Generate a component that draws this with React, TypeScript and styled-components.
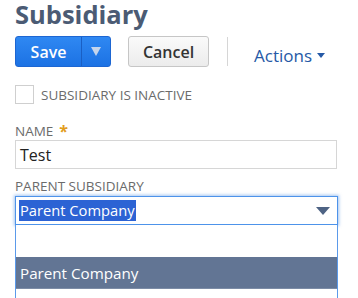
import React from 'react';
import styled, { createGlobalStyle } from 'styled-components';

const GlobalStyle = createGlobalStyle`
  body {
    margin: 0;
    background: #fff;
    font-family: 'Open Sans', 'Liberation Sans', sans-serif;
  }
`

const Page = styled.div`
  width: 358px;
  height: 298px;
  overflow: hidden;
  padding-left: 15px;
  box-sizing: border-box;
`

const Title = styled.h1`
  margin: 0;
  height: 36px;
  font-size: 25.5px;
  line-height: 28px;
  font-weight: 700;
  color: #4b5b74;
`

const Toolbar = styled.div`
  display: flex;
  align-items: center;
  height: 31px;
`

const SplitButton = styled.div`
  display: flex;
  width: 96px;
  height: 31px;
  box-sizing: border-box;
  border: 1px solid #1d66d2;
  border-radius: 3px;
  background: linear-gradient(#2f88f2, #1c72e4);
  overflow: hidden;
`

const SaveLabel = styled.div`
  width: 65px;
  display: flex;
  align-items: center;
  justify-content: center;
  color: #fff;
  font-size: 16px;
  font-weight: 600;
  border-right: 1px solid #1a5fc4;
`

const SaveArrow = styled.div`
  flex: 1;
  display: flex;
  align-items: center;
  justify-content: center;
`

const Button = styled.div`
  margin-left: 17px;
  width: 81px;
  height: 31px;
  box-sizing: border-box;
  border: 1px solid #c6c6c6;
  border-radius: 3px;
  background: linear-gradient(#fafafa, #ececec);
  display: flex;
  align-items: center;
  justify-content: center;
  font-size: 16px;
  font-weight: 600;
  color: #333;
`

const Separator = styled.div`
  width: 1px;
  height: 29px;
  background: #d6d6d6;
  margin-left: 18px;
`

const Actions = styled.div`
  margin-left: 26px;
  margin-top: 7px;
  display: flex;
  align-items: center;
  gap: 5px;
  font-size: 17px;
  color: #2559a6;
`

const CheckRow = styled.label`
  display: flex;
  align-items: center;
  gap: 7px;
  margin-top: 18px;
  height: 19px;
`

const Box = styled.span`
  width: 19px;
  height: 19px;
  box-sizing: border-box;
  border: 1px solid #cfcfcf;
  background: #fff;
`

const FieldLabel = styled.div<{ $top: number }>`
  margin-top: ${p => p.$top}px;
  font-size: 13.5px;
  line-height: 14px;
  color: #6b6b6b;
  display: flex;
  align-items: center;
  gap: 6px;
`

const Star = styled.span`
  color: #e29d1c;
  font-size: 16px;
  font-weight: 700;
  line-height: 14px;
  margin-top: 1px;
`

const TextInput = styled.div`
  margin-top: 2px;
  width: 322px;
  height: 29px;
  box-sizing: border-box;
  border: 1px solid #d6d6d6;
  padding: 0 4px;
  display: flex;
  align-items: center;
  font-size: 16px;
  color: #222;
`

const Select = styled.div`
  margin-top: 3px;
  width: 323px;
  height: 29px;
  box-sizing: border-box;
  border: 1px solid #4d93ea;
  box-shadow: 0 0 3px 1px rgba(90, 150, 230, 0.55);
  display: flex;
  align-items: center;
  justify-content: space-between;
  padding: 0 7px 0 3px;
`

const Highlighted = styled.span`
  background: #2c63d4;
  color: #fff;
  font-size: 14.7px;
  line-height: 21px;
  padding: 0 1px;
`

const List = styled.div`
  width: 323px;
  box-sizing: border-box;
  border: 1px solid #5b9aea;
  border-top: none;
  height: 80px;
`

const Option = styled.div<{ $active?: boolean }>`
  height: 31px;
  display: flex;
  align-items: center;
  padding-left: 4px;
  font-size: 15.2px;
  color: ${p => (p.$active ? '#fff' : '#222')};
  background: ${p => (p.$active ? '#627594' : '#fff')};
  border-bottom: 1px solid ${p => (p.$active ? '#7c8ca6' : 'transparent')};
`

const Triangle: React.FC<{ w: number; h: number; color: string }> = ({ w, h, color }) => (
  <svg width={w} height={h} viewBox={`0 0 ${w} ${h}`}>
    <polygon points={`0,0 ${w},0 ${w / 2},${h}`} fill={color} />
  </svg>
)

const App: React.FC = () => {
  return (
    <Page>
      <GlobalStyle />
      <Title>Subsidiary</Title>
      <Toolbar>
        <SplitButton>
          <SaveLabel>Save</SaveLabel>
          <SaveArrow>
            <Triangle w={10} h={9} color='#c5d5ec' />
          </SaveArrow>
        </SplitButton>
        <Button>Cancel</Button>
        <Separator />
        <Actions>
          Actions
          <Triangle w={8} h={5} color='#2559a6' />
        </Actions>
      </Toolbar>
      <CheckRow>
        <Box />
        <FieldLabel $top={0}>SUBSIDIARY IS INACTIVE</FieldLabel>
      </CheckRow>
      <FieldLabel $top={19}>
        NAME <Star>*</Star>
      </FieldLabel>
      <TextInput>Test</TextInput>
      <FieldLabel $top={10}>PARENT SUBSIDIARY</FieldLabel>
      <Select>
        <Highlighted>Parent Company</Highlighted>
        <Triangle w={14} h={8} color='#4e6384' />
      </Select>
      <List>
        <Option />
        <Option $active>Parent Company</Option>
        <Option />
      </List>
    </Page>
  )
}

export default App;
